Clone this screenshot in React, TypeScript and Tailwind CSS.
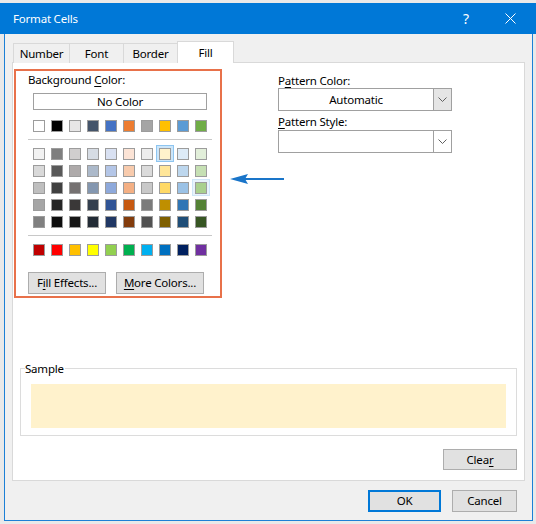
import React from "react";

const themeTop = ["#FFFFFF", "#000000", "#E7E6E6", "#44546A", "#4472C4", "#ED7D31", "#A5A5A5", "#FFC000", "#5B9BD5", "#70AD47"];

const tints = [
  ["#F2F2F2", "#7F7F7F", "#D0CECE", "#D6DCE4", "#D9E1F2", "#FCE4D6", "#EDEDED", "#FFF2CC", "#DDEBF7", "#E2EFDA"],
  ["#D9D9D9", "#595959", "#AEAAAA", "#ACB9CA", "#B4C6E7", "#F8CBAD", "#DBDBDB", "#FFE699", "#BDD7EE", "#C6E0B4"],
  ["#BFBFBF", "#404040", "#757171", "#8497B0", "#8EA9DB", "#F4B084", "#C9C9C9", "#FFD966", "#9BC2E6", "#A9D08E"],
  ["#A6A6A6", "#262626", "#3A3838", "#333F4F", "#305496", "#C65911", "#7B7B7B", "#BF8F00", "#2F75B5", "#548235"],
  ["#808080", "#0D0D0D", "#161616", "#222B35", "#203764", "#833C0C", "#525252", "#806000", "#1F4E78", "#375623"],
];

const standard = ["#C00000", "#FF0000", "#FFC000", "#FFFF00", "#92D050", "#00B050", "#00B0F0", "#0070C0", "#002060", "#7030A0"];

// selected swatch (row, col) in the tint block, and the hovered one
const SELECTED = "0-7";
const HOVER = "2-9";

function Swatch({ color, mark }: { color: string; mark?: "selected" | "hover" }) {
  return (
    <span className="relative block w-[12px] h-[12px]">
      {mark === "selected" && (
        <span className="absolute -left-[3px] -top-[3px] w-[18px] h-[17px] border border-[#8ec5f0] bg-[#cce6fa]" />
      )}
      {mark === "hover" && (
        <span className="absolute -left-[3px] -top-[3px] w-[18px] h-[17px] border border-[#cfe6f8] bg-[#e8f3fc]" />
      )}
      <span className="absolute inset-0 border border-[#9c9c9c]" style={{ background: color }} />
    </span>
  );
}

function SwatchRow({ colors, row }: { colors: string[]; row?: number }) {
  return (
    <div className="ml-[17px] flex gap-[6px]">
      {colors.map((c, i) => {
        const key = `${row}-${i}`;
        const mark = key === SELECTED ? "selected" : key === HOVER ? "hover" : undefined;
        return <Swatch key={i} color={c} mark={mark} />;
      })}
    </div>
  );
}

function Chevron() {
  return (
    <svg width="9" height="6" viewBox="0 0 9 6" className="block">
      <polyline points="0.5,0.5 4.5,4.5 8.5,0.5" fill="none" stroke="#606060" strokeWidth="1" />
    </svg>
  );
}

const btn = "flex items-center justify-center bg-[#e1e1e1] border border-[#adadad] text-black";

export default function App() {
  return (
    <div className="relative w-[536px] h-[524px] bg-[#e9e9e9] pt-[3px] overflow-hidden font-['Noto_Sans',sans-serif] text-[11.5px] tracking-[-0.2px] text-black">
      {/* Title bar */}
      <div className="h-[31px] bg-[#0078d7] flex items-center pl-[13px] pr-[4px] text-white">
        <span className="text-[11.5px] mt-[1px]">Format Cells</span>
        <span className="ml-auto w-[44px] flex justify-center text-[14px] leading-none">?</span>
        <span className="w-[44px] flex justify-center">
          <svg width="11" height="11" viewBox="0 0 11 11">
            <path d="M0.5 0.5 L10.5 10.5 M10.5 0.5 L0.5 10.5" stroke="#ffffff" strokeWidth="1" />
          </svg>
        </span>
      </div>

      {/* Body */}
      <div className="ml-[4px] mr-[3px] h-[487px] bg-[#f0f0f0] border-x border-b border-[#1c80d6] px-[7px] pt-[7px]">
        {/* Tabs */}
        <div className="flex items-end h-[22px] pl-[1px]">
          <div className="w-[57px] h-[20px] border border-b-0 border-[#d9d9d9] bg-[#f0f0f0] flex items-center justify-center">Number</div>
          <div className="-ml-px w-[55px] h-[20px] border border-b-0 border-[#d9d9d9] bg-[#f0f0f0] flex items-center justify-center">Font</div>
          <div className="-ml-px w-[55px] h-[20px] border border-b-0 border-[#d9d9d9] bg-[#f0f0f0] flex items-center justify-center">Border</div>
          <div className="-ml-px relative z-10 w-[57px] h-[22px] border border-b-0 border-[#d9d9d9] bg-white flex items-center justify-center">Fill</div>
        </div>

        {/* Panel */}
        <div className="-mt-px h-[419px] bg-white border border-[#d9d9d9]">
          <div className="flex">
            {/* Background colour block */}
            <div className="ml-[1px] mt-[6px] w-[208px] h-[229px] border-2 border-[#e8714a]">
              <div className="pl-[12px] leading-[16px] mt-[1px]">
                Background <u className="underline-offset-2">C</u>olor:
              </div>
              <div className="ml-[17px] mt-[5px] w-[174px] h-[17px] border border-[#a0a0a0] flex items-center justify-center leading-none">
                No Color
              </div>
              <div className="mt-[10px]">
                <SwatchRow colors={themeTop} />
              </div>
              <div className="ml-[12px] mt-[7px] w-[184px] h-px bg-[#c8c8c8]" />
              <div className="mt-[8px] flex flex-col gap-[5px]">
                {tints.map((r, i) => (
                  <SwatchRow key={i} colors={r} row={i} />
                ))}
              </div>
              <div className="ml-[12px] mt-[7px] w-[184px] h-px bg-[#c8c8c8]" />
              <div className="mt-[8px]">
                <SwatchRow colors={standard} />
              </div>
              <div className="ml-[12px] mt-[16px] flex gap-[10px]">
                <div className={`${btn} w-[78px] h-[22px]`}>
                  <span>F<u className="underline-offset-2">i</u>ll Effects...</span>
                </div>
                <div className={`${btn} w-[88px] h-[22px]`}>
                  <span><u className="underline-offset-2">M</u>ore Colors...</span>
                </div>
              </div>
            </div>

            {/* Pattern settings */}
            <div className="ml-[56px] mt-[10px] w-[174px]">
              <div className="leading-[15px]">
                P<u className="underline-offset-2">a</u>ttern Color:
              </div>
              <div className="h-[23px] border border-[#a0a0a0] flex">
                <div className="flex-1 flex items-center justify-center">Automatic</div>
                <div className="w-[18px] border-l border-[#a0a0a0] bg-[#e5e5e5] flex items-center justify-center">
                  <Chevron />
                </div>
              </div>
              <div className="mt-[3px] leading-[15px]">
                <u className="underline-offset-2">P</u>attern Style:
              </div>
              <div className="mt-[1px] h-[23px] border border-[#a0a0a0] flex">
                <div className="flex-1" />
                <div className="w-[18px] border-l border-[#a0a0a0] flex items-center justify-center">
                  <Chevron />
                </div>
              </div>
            </div>
          </div>

          {/* Sample */}
          <div className="relative mx-[7px] mt-[70px] h-[68px] border border-[#dcdcdc]">
            <span className="absolute left-[4px] -top-[8px] bg-white pr-[1px] leading-[16px]">Sample</span>
            <div className="mx-[10px] mt-[15px] h-[44px] bg-[#fff2cc]" />
          </div>

          <div className="flex justify-end mr-[7px] mt-[13px]">
            <div className={`${btn} w-[74px] h-[21px]`}>
              <span>Clea<u className="underline-offset-2">r</u></span>
            </div>
          </div>
        </div>

        {/* Dialog buttons */}
        <div className="mt-[9px] flex justify-end gap-[11px] pr-[8px]">
          <div className="w-[73px] h-[22px] flex items-center justify-center bg-[#e1e1e1] border-2 border-[#0078d7]">OK</div>
          <div className={`${btn} w-[65px] h-[22px]`}>Cancel</div>
        </div>
      </div>

      {/* Annotation arrow */}
      <svg className="absolute left-[228px] top-[172px]" width="58" height="14" viewBox="0 0 58 14">
        <line x1="16" y1="7" x2="56" y2="7" stroke="#1a75c9" strokeWidth="2" />
        <path d="M2 7 L20 2 L17 7 L20 12 Z" fill="#1a75c9" />
      </svg>
    </div>
  );
}
